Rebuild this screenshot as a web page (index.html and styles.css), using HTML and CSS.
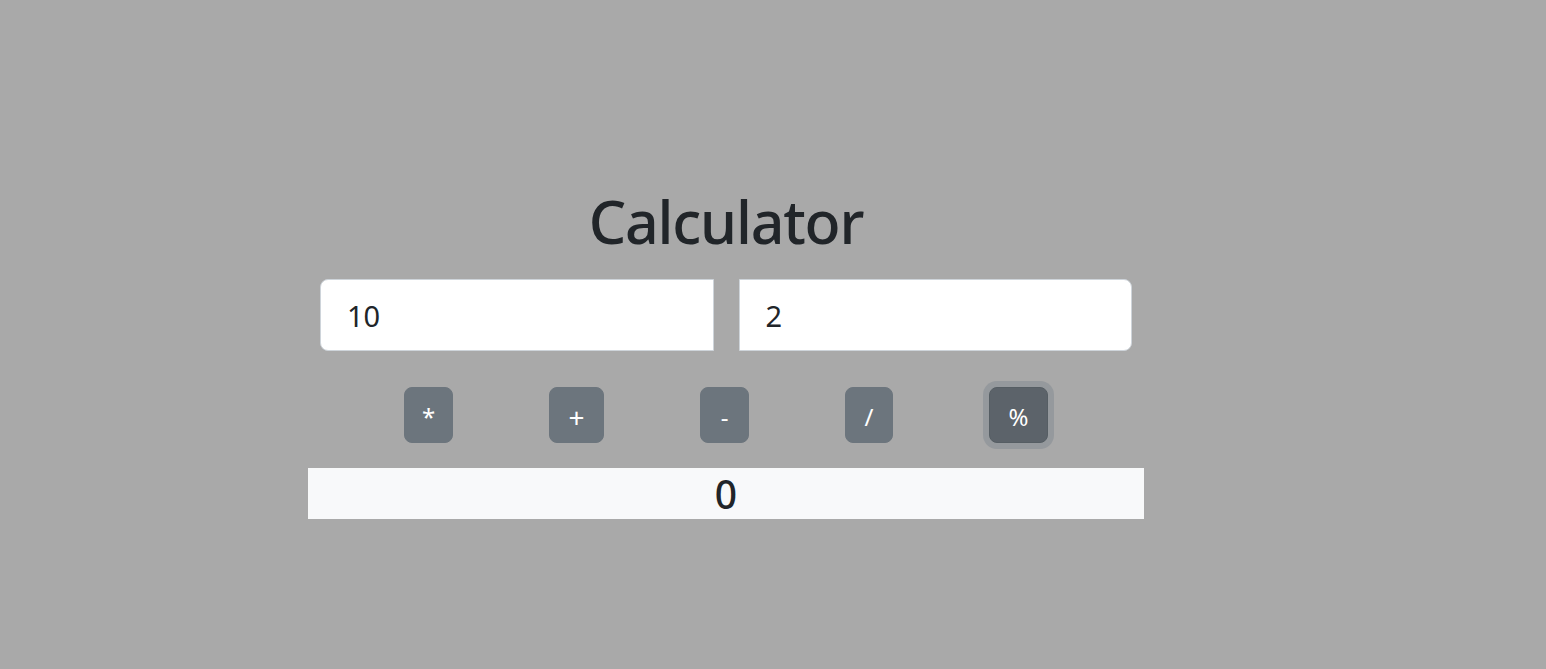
FILE: index.html
```html
<!DOCTYPE html>
<html lang="en">
<head>
<meta charset="utf-8">
<title>Calculator</title>
<link rel="stylesheet" href="styles.css">
</head>
<body>
<main class="calc">
  <h1 class="title">Calculator</h1>
  <div class="inputs">
    <input class="field field-left" type="text" value="10">
    <input class="field field-right" type="text" value="2">
  </div>
  <div class="ops">
    <button class="op op-mul">*</button>
    <button class="op op-add">+</button>
    <button class="op op-sub">-</button>
    <button class="op op-div">/</button>
    <button class="op op-mod op-active">%</button>
  </div>
  <div class="result">0</div>
</main>
</body>
</html>
```
FILE: styles.css
```css
html, body {
  margin: 0;
  padding: 0;
  background: #a9a9a9;
  font-family: "Noto Sans", "Open Sans", sans-serif;
  color: #212529;
}
body {
  height: 669px;
  overflow: hidden;
}
.calc {
  width: 836px;
  margin-left: 308px;
  padding-top: 184px;
}
.title {
  margin: 0 0 20px;
  height: 75px;
  font-size: 59px;
  font-weight: 500;
  line-height: 75px;
  letter-spacing: -1.2px;
  text-align: center;
}
.inputs {
  display: flex;
  gap: 25px;
  padding: 0 12px;
}
.field {
  flex: 1 1 0;
  min-width: 0;
  box-sizing: border-box;
  height: 72px;
  margin: 0;
  padding: 14px 26px;
  border: 1px solid #ced4da;
  background: #fff;
  font-family: inherit;
  font-size: 29px;
  line-height: 42px;
  color: #212529;
  outline: none;
}
.field-left {
  border-radius: 8px 0 0 8px;
}
.field-right {
  border-radius: 0 8px 8px 0;
}
.ops {
  display: flex;
  justify-content: space-evenly;
  margin-top: 36px;
}
.op {
  box-sizing: border-box;
  height: 56px;
  padding: 4px 0 0;
  border: 1px solid #6c757d;
  border-radius: 8px;
  background: #6c757d;
  color: #fff;
  font-family: inherit;
  font-size: 24px;
  line-height: 30px;
}
.op-add {
  font-size: 28px;
}
.op-mul { width: 49px; }
.op-add { width: 55px; }
.op-sub { width: 49px; }
.op-div { width: 48px; }
.op-mod { width: 59px; }
.op-active {
  background: #5c636a;
  border-color: #565e64;
  box-shadow: 0 0 0 6px rgba(130, 138, 145, 0.5);
}
.result {
  margin-top: 25px;
  height: 51px;
  background: #f8f9fa;
  text-align: center;
  font-size: 39px;
  font-weight: 500;
  line-height: 51px;
}
```
